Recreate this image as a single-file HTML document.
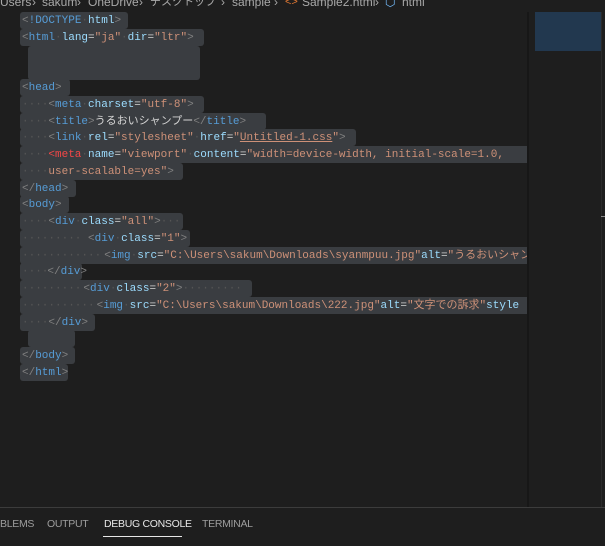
<!DOCTYPE html>
<html><head><meta charset="utf-8"><style>
body{margin:0;width:605px;height:545px;background:#1e1e1e;overflow:hidden;position:relative;font-family:"Liberation Sans","Noto Sans CJK JP",sans-serif}
.bc{position:absolute;top:-6px;height:16px;font-size:12px;line-height:16px;color:#a9a9a9;white-space:pre}
.ed{position:absolute;left:0;top:12px;width:528px;height:495px;overflow:hidden}
.ln{position:absolute;left:0;height:17px;width:1000px}
.s{position:absolute;top:0;height:17px;background:#3a3d41;border-radius:3px}
.t{position:absolute;top:2px;left:22px;font-family:"Liberation Mono","Noto Sans CJK JP",monospace;font-size:11px;line-height:15px;white-space:pre;color:#d4d4d4}
.p{color:#808080}.k{color:#569cd6}.a{color:#9cdcfe}.v{color:#ce9178}.r{color:#f44747}.d{color:#555}.u{text-decoration:underline;text-decoration-color:#ce9178}
.vl{position:absolute;left:527px;top:12px;width:2px;height:495px;background:#171717}
.mm{position:absolute;left:535px;top:12px;width:67px;height:39px;background:#264f78;opacity:.55}
.panel{position:absolute;left:0;top:507px;width:605px;height:38px;border-top:1px solid #3c3c3c;background:#1e1e1e}
.tab{position:absolute;top:10px;font-size:10.5px;color:#9d9d9d;letter-spacing:-.3px}
</style></head><body>
<div class="bc" style="left:0">Users</div><div class="bc" style="left:32px">›</div>
<div class="bc" style="left:42px">sakum</div><div class="bc" style="left:77px">›</div>
<div class="bc" style="left:88px">OneDrive</div><div class="bc" style="left:139px">›</div>
<div class="bc" style="left:150px;font-size:11px">デスクトップ</div><div class="bc" style="left:221px">›</div>
<div class="bc" style="left:232px">sample</div><div class="bc" style="left:274px">›</div>
<div class="bc" style="left:285px;color:#e37933;font-size:11px">&lt;&gt;</div>
<div class="bc" style="left:302px">Sample2.html</div><div class="bc" style="left:375px">›</div>
<div class="bc" style="left:385px;color:#75beff">⬡</div>
<div class="bc" style="left:402px">html</div>
<div class="ed">
<div class="ln" style="top:0"><div class="s" style="left:20px;width:108px"></div><div class="t"><span class="p">&lt;</span><span class="k">!DOCTYPE</span><span class="d">·</span><span class="a">html</span><span class="p">&gt;</span></div></div>
<div class="ln" style="top:16.75px"><div class="s" style="left:20px;width:184px"></div><div class="t"><span class="p">&lt;</span><span class="k">html</span><span class="d">·</span><span class="a">lang</span>=<span class="v">"ja"</span><span class="d">·</span><span class="a">dir</span>=<span class="v">"ltr"</span><span class="p">&gt;</span></div></div>
<div class="ln" style="top:33.5px"><div class="s" style="left:28px;width:172px;height:34px"></div></div>
<div class="ln" style="top:67px"><div class="s" style="left:20px;width:50px"></div><div class="t"><span class="p">&lt;</span><span class="k">head</span><span class="p">&gt;</span></div></div>
<div class="ln" style="top:83.75px"><div class="s" style="left:20px;width:184px"></div><div class="t"><span class="d">····</span><span class="p">&lt;</span><span class="k">meta</span><span class="d">·</span><span class="a">charset</span>=<span class="v">"utf-8"</span><span class="p">&gt;</span></div></div>
<div class="ln" style="top:100.5px"><div class="s" style="left:20px;width:246px"></div><div class="t"><span class="d">····</span><span class="p">&lt;</span><span class="k">title</span><span class="p">&gt;</span>うるおいシャンプー<span class="p">&lt;/</span><span class="k">title</span><span class="p">&gt;</span></div></div>
<div class="ln" style="top:117.25px"><div class="s" style="left:20px;width:336px"></div><div class="t"><span class="d">····</span><span class="p">&lt;</span><span class="k">link</span><span class="d">·</span><span class="a">rel</span>=<span class="v">"stylesheet"</span><span class="d">·</span><span class="a">href</span>=<span class="v">"<span class="u">Untitled-1.css</span>"</span><span class="p">&gt;</span></div></div>
<div class="ln" style="top:134px"><div class="s" style="left:20px;width:510px"></div><div class="t"><span class="d">····</span><span class="r">&lt;meta</span><span class="d">·</span><span class="a">name</span>=<span class="v">"viewport"</span><span class="d">·</span><span class="a">content</span>=<span class="v">"width=device-width, initial-scale=1.0,</span></div></div>
<div class="ln" style="top:150.75px"><div class="s" style="left:20px;width:163px"></div><div class="t"><span class="d">····</span><span class="v">user-scalable=yes"</span><span class="p">&gt;</span></div></div>
<div class="ln" style="top:167.5px"><div class="s" style="left:20px;width:56px"></div><div class="t"><span class="p">&lt;/</span><span class="k">head</span><span class="p">&gt;</span></div></div>
<div class="ln" style="top:184.25px"><div class="s" style="left:20px;width:49px"></div><div class="t"><span class="p">&lt;</span><span class="k">body</span><span class="p">&gt;</span></div></div>
<div class="ln" style="top:201px"><div class="s" style="left:20px;width:163px"></div><div class="t"><span class="d">····</span><span class="p">&lt;</span><span class="k">div</span><span class="d">·</span><span class="a">class</span>=<span class="v">"all"</span><span class="p">&gt;</span><span class="d">···</span></div></div>
<div class="ln" style="top:217.75px"><div class="s" style="left:20px;width:170px"></div><div class="t"><span class="d">·········</span> <span class="p">&lt;</span><span class="k">div</span><span class="d">·</span><span class="a">class</span>=<span class="v">"1"</span><span class="p">&gt;</span></div></div>
<div class="ln" style="top:234.5px"><div class="s" style="left:20px;width:510px"></div><div class="t"><span class="d">············</span><span style="margin-left:3px"></span><span class="p">&lt;</span><span class="k">img</span><span class="d">·</span><span class="a">src</span>=<span class="v">"C:\Users\sakum\Downloads\syanmpuu.jpg"</span><span class="a">alt</span>=<span class="v">"うるおいシャンプー"</span></div></div>
<div class="ln" style="top:251.25px"><div class="s" style="left:20px;width:62px"></div><div class="t"><span class="d">····</span><span style="margin-left:-1px"></span><span class="p">&lt;/</span><span class="k">div</span><span class="p">&gt;</span></div></div>
<div class="ln" style="top:268px"><div class="s" style="left:20px;width:232px"></div><div class="t"><span class="d">·········</span><span style="margin-left:2px"></span><span class="p">&lt;</span><span class="k">div</span><span class="d">·</span><span class="a">class</span>=<span class="v">"2"</span><span class="p">&gt;</span><span class="d">·········</span></div></div>
<div class="ln" style="top:284.75px"><div class="s" style="left:20px;width:510px"></div><div class="t"><span class="d">···········</span><span style="margin-left:2px"></span><span class="p">&lt;</span><span class="k">img</span><span class="d">·</span><span class="a">src</span>=<span class="v">"C:\Users\sakum\Downloads\222.jpg"</span><span class="a">alt</span>=<span class="v">"文字での訴求"</span><span class="a">style</span></div></div>
<div class="ln" style="top:301.5px"><div class="s" style="left:20px;width:75px"></div><div class="t"><span class="d">····</span><span class="p">&lt;/</span><span class="k">div</span><span class="p">&gt;</span></div></div>
<div class="ln" style="top:318.25px"><div class="s" style="left:28px;width:47px"></div></div>
<div class="ln" style="top:335px"><div class="s" style="left:20px;width:55px"></div><div class="t"><span class="p">&lt;/</span><span class="k">body</span><span class="p">&gt;</span></div></div>
<div class="ln" style="top:351.75px"><div class="s" style="left:20px;width:48px"></div><div class="t"><span class="p">&lt;/</span><span class="k">html</span><span class="p">&gt;</span></div></div>
</div>
<div class="vl"></div>
<div class="mm"></div>
<div style="position:absolute;left:601px;top:12px;width:1px;height:495px;background:#2a2a2a"></div>
<div style="position:absolute;left:601px;top:216px;width:4px;height:1px;background:#888"></div>
<div class="panel">
<div class="tab" style="left:0">BLEMS</div>
<div class="tab" style="left:47px">OUTPUT</div>
<div class="tab" style="left:104px;color:#e7e7e7">DEBUG CONSOLE</div>
<div style="position:absolute;left:103px;top:28px;width:79px;height:1px;background:#e7e7e7"></div>
<div class="tab" style="left:202px">TERMINAL</div>
</div>
</body></html>
